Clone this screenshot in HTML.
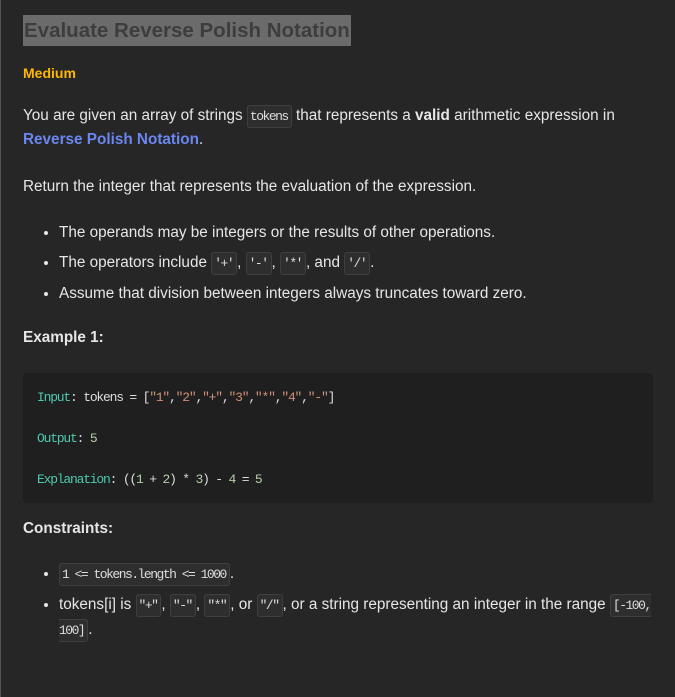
<!DOCTYPE html>
<html><head><meta charset="utf-8"><style>
body{margin:0;background:#262626;width:675px;height:697px;overflow:hidden;font-family:"Liberation Sans",sans-serif;color:#e6e6e6;border-left:1px solid #555;box-sizing:border-box;}
.w{position:absolute;left:23px;top:0;width:630px;}
h1{position:absolute;top:15px;left:0;margin:0;height:31px;line-height:31px;background:#6b6b6b;color:#3d3d3d;font-size:20.5px;font-weight:bold;padding:0 1px;white-space:nowrap;}
.t{position:absolute;left:0;font-size:15.3px;line-height:24px;white-space:nowrap;}
code{font-family:"Liberation Mono",monospace;font-size:13px;letter-spacing:-1.5px;background:#2e2e2e;border:1px solid #3f3f3f;border-radius:3px;padding:3px 3px 3px 2px;color:#ddd;}
ul{margin:0;padding-left:36px;}
li{margin:0;}
.pre{position:absolute;left:0;top:373px;width:630px;height:130px;background:#1f1f1f;border-radius:4px;font-family:"Liberation Mono",monospace;font-size:13px;letter-spacing:-1.2px;color:#ddd;}
.pre div{position:absolute;left:14px;white-space:pre;}
.k{color:#4ec9b0}.s{color:#ce9178}.n{color:#b5cea8}
</style></head><body><div class="w">
<h1>Evaluate Reverse Polish Notation</h1>
<div class="t" style="top:61px;color:#ffb800;font-weight:bold;font-size:14px">Medium</div>
<div class="t" style="top:104px">You are given an array of strings <code>tokens</code> that represents a <b>valid</b> arithmetic expression in</div>
<div class="t" style="top:128px"><b style="color:#6b86f0">Reverse Polish Notation</b>.</div>
<div class="t" style="top:175px">Return the integer that represents the evaluation of the expression.</div>
<div class="t" style="top:221px;left:0"><ul>
<li style="margin-bottom:6px">The operands may be integers or the results of other operations.</li>
<li style="margin-bottom:6px">The operators include <code>'+'</code>, <code>'-'</code>, <code>'*'</code>, and <code>'/'</code>.</li>
<li>Assume that division between integers always truncates toward zero.</li></ul></div>
<div class="t" style="top:326px;font-weight:bold">Example 1:</div>
<div class="pre">
<div style="top:17px"><span class="k">Input</span>: tokens = [<span class="s">"1"</span>,<span class="s">"2"</span>,<span class="s">"+"</span>,<span class="s">"3"</span>,<span class="s">"*"</span>,<span class="s">"4"</span>,<span class="s">"-"</span>]</div>
<div style="top:58px"><span class="k">Output</span>: <span class="n">5</span></div>
<div style="top:99px"><span class="k">Explanation</span>: ((<span class="n">1</span> + <span class="n">2</span>) * <span class="n">3</span>) - <span class="n">4</span> = <span class="n">5</span></div>
</div>
<div class="t" style="top:517px;font-weight:bold">Constraints:</div>
<div class="t" style="top:562px;white-space:normal;width:630px"><ul>
<li style="margin-bottom:6px"><code>1 &lt;= tokens.length &lt;= 1000</code>.</li>
<li>tokens[i] is <code>"+"</code>, <code>"-"</code>, <code>"*"</code>, or <code>"/"</code>, or a string representing an integer in the range <code>[-100, 100]</code>.</li></ul></div>
</div></body></html>
